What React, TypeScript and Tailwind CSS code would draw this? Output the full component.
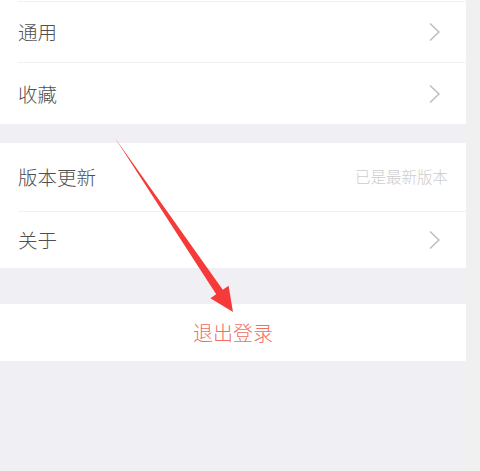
import React from "react";

const font = { fontFamily: '"Noto Sans CJK SC", "Noto Sans", sans-serif' };

const Chevron = () => (
  <svg width="14" height="20" viewBox="0 0 14 20" fill="none">
    <polyline
      points="2.5,2 11,10 2.5,18"
      stroke="#bfbfc4"
      strokeWidth="1.7"
      strokeLinecap="round"
      strokeLinejoin="round"
    />
  </svg>
);

const Row = ({
  label,
  height,
  right,
}: {
  label: string;
  height: string;
  right?: React.ReactNode;
}) => (
  <div className={`flex items-center justify-between pl-[18px] pr-[24px] ${height}`}>
    <span className="text-[19.5px] font-light leading-none text-[#4f4f4f]">{label}</span>
    {right ?? <Chevron />}
  </div>
);

const Divider = () => (
  <div className="pl-[18px]">
    <div className="h-px bg-[#f0f0f2]" />
  </div>
);

export default function App() {
  return (
    <div className="relative flex w-[480px] h-[471px] bg-[#efeff4] overflow-hidden" style={font}>
      <div className="flex flex-col w-[466px]">
        {/* general */}
        <div className="bg-white">
          <div className="h-px" />
          <Divider />
          <Row label="通用" height="h-[60px]" />
          <Divider />
          <Row label="收藏" height="h-[61px]" />
        </div>

        <div className="h-[19px]" />

        {/* version / about */}
        <div className="bg-white">
          <Row
            label="版本更新"
            height="h-[68px]"
            right={
              <span className="text-[15.5px] font-light leading-none text-[#cdcdcd] -mr-[6px]">
                已是最新版本
              </span>
            }
          />
          <Divider />
          <Row label="关于" height="h-[56px]" />
        </div>

        <div className="h-[36px]" />

        <div className="flex items-center justify-center h-[57px] bg-white">
          <span className="text-[20px] font-light leading-none text-[#ef6f60]">退出登录</span>
        </div>
      </div>
      <div className="w-[14px] bg-[#f0f0f0]" />

      {/* annotation arrow */}
      <svg className="absolute left-0 top-0 pointer-events-none" width="480" height="471">
        <polygon
          points="115,138 222.8,289.8 228.6,285.8 233,312 210.4,298.2 216.2,294.2"
          fill="#f63a3a"
        />
      </svg>
    </div>
  );
}
